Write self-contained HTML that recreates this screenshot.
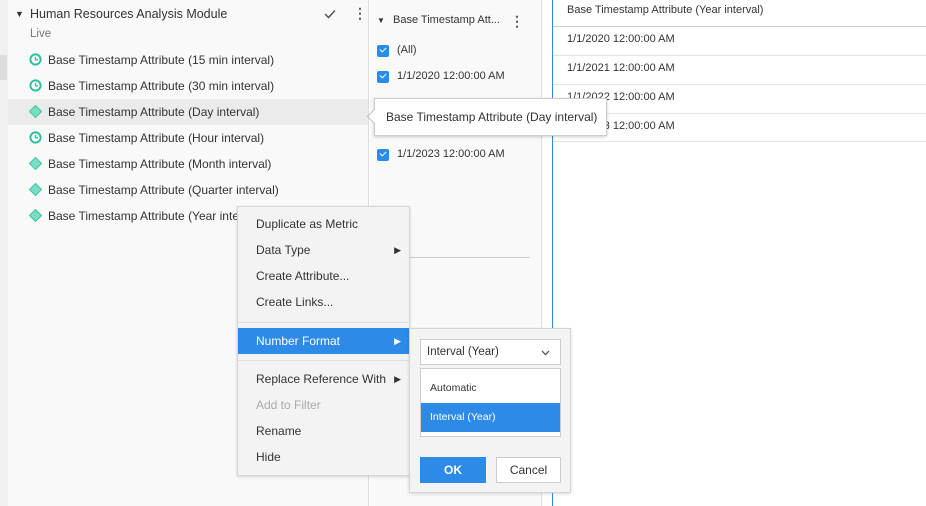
<!DOCTYPE html>
<html><head><style>
*{box-sizing:border-box;margin:0;padding:0}
body{width:926px;height:506px;overflow:hidden;font-family:"Liberation Sans",sans-serif;font-size:12px;color:#333;background:#fff;position:relative}
.abs{position:absolute;white-space:nowrap}
.row{position:absolute;left:8px;width:360px;height:26px;line-height:26px;padding-left:40px;white-space:nowrap}
.ic{position:absolute;left:21px;top:6px;width:13px;height:13px}
.cb{position:absolute;width:12px;height:12px;background:#2d8ae6;border-radius:2px}
.cb:after{content:"";position:absolute;left:3px;top:2px;width:5px;height:3px;border-left:1.5px solid #fff;border-bottom:1.5px solid #fff;transform:rotate(-45deg)}
.mi{position:absolute;left:0;width:172px;height:26px;line-height:26px;padding-left:18px;font-size:12px}
.arr{position:absolute;right:9px;font-size:9px}
</style></head><body>
<div class="abs" style="left:0;top:0;width:8px;height:506px;background:#f0f0f0"></div>
<div class="abs" style="left:0;top:55px;width:7px;height:25px;background:#ddd"></div>
<div class="abs" style="left:8px;top:0;width:361px;height:506px;background:#f9f9f9;border-right:1px solid #ddd"></div>
<div class="abs" style="left:370px;top:0;width:172px;height:506px;background:#f9f9f9;border-right:1px solid #ddd"></div>
<div class="abs" style="left:552px;top:0;width:374px;height:506px;background:#fff;border-left:1px solid #2d8ae6"></div>

<div class="abs" style="left:15px;top:9px;font-size:9px">▼</div>
<div class="abs" style="left:30px;top:7px;font-size:12.5px">Human Resources Analysis Module</div>
<svg class="abs" style="left:324px;top:9px" width="12" height="10" viewBox="0 0 12 10"><path d="M1 5L4.5 8.5L11 1.5" stroke="#555" stroke-width="1.5" fill="none"/></svg>
<div class="abs" style="left:353px;top:5px;font-size:14px;font-weight:bold;color:#555">⋮</div>
<div class="abs" style="left:30px;top:28px;color:#777;font-size:11.5px">Live</div>

<div class="row" style="top:47px"><svg class="ic" viewBox="0 0 12 12"><circle cx="6" cy="6" r="5.6" fill="#26c39a"/><circle cx="6" cy="6" r="3.8" fill="#fff"/><path d="M6 3.5V6.3H8.3" stroke="#26c39a" stroke-width="1.3" fill="none"/></svg>Base Timestamp Attribute (15 min interval)</div>
<div class="row" style="top:73px"><svg class="ic" viewBox="0 0 12 12"><circle cx="6" cy="6" r="5.6" fill="#26c39a"/><circle cx="6" cy="6" r="3.8" fill="#fff"/><path d="M6 3.5V6.3H8.3" stroke="#26c39a" stroke-width="1.3" fill="none"/></svg>Base Timestamp Attribute (30 min interval)</div>
<div class="row" style="top:99px;background:#ebebeb"><svg class="ic" viewBox="0 0 12 12"><path d="M6 0.5L11.5 6L6 11.5L0.5 6Z" fill="#7fdcc4" stroke="#3cc8a2"/></svg>Base Timestamp Attribute (Day interval)</div>
<div class="row" style="top:125px"><svg class="ic" viewBox="0 0 12 12"><circle cx="6" cy="6" r="5.6" fill="#26c39a"/><circle cx="6" cy="6" r="3.8" fill="#fff"/><path d="M6 3.5V6.3H8.3" stroke="#26c39a" stroke-width="1.3" fill="none"/></svg>Base Timestamp Attribute (Hour interval)</div>
<div class="row" style="top:151px"><svg class="ic" viewBox="0 0 12 12"><path d="M6 0.5L11.5 6L6 11.5L0.5 6Z" fill="#7fdcc4" stroke="#3cc8a2"/></svg>Base Timestamp Attribute (Month interval)</div>
<div class="row" style="top:177px"><svg class="ic" viewBox="0 0 12 12"><path d="M6 0.5L11.5 6L6 11.5L0.5 6Z" fill="#7fdcc4" stroke="#3cc8a2"/></svg>Base Timestamp Attribute (Quarter interval)</div>
<div class="row" style="top:203px"><svg class="ic" viewBox="0 0 12 12"><path d="M6 0.5L11.5 6L6 11.5L0.5 6Z" fill="#7fdcc4" stroke="#3cc8a2"/></svg>Base Timestamp Attribute (Year interval)</div>

<div class="abs" style="left:377px;top:16px;font-size:8px">▼</div>
<div class="abs" style="left:393px;top:14px;font-size:11px">Base Timestamp Att...</div>
<div class="abs" style="left:510px;top:13px;font-size:14px;font-weight:bold;color:#555">⋮</div>
<div class="cb" style="left:377px;top:45px"></div><div class="abs" style="left:397px;top:44px;font-size:11px">(All)</div>
<div class="cb" style="left:377px;top:71px"></div><div class="abs" style="left:397px;top:70px;font-size:11px">1/1/2020 12:00:00 AM</div>
<div class="cb" style="left:377px;top:149px"></div><div class="abs" style="left:397px;top:148px;font-size:11px">1/1/2023 12:00:00 AM</div>
<div class="abs" style="left:410px;top:257px;width:120px;border-top:1px solid #ccc"></div>

<div class="abs" style="left:553px;top:0;width:373px;height:27px;border-bottom:1px solid #ccc"></div>
<div class="abs" style="left:567px;top:4px;font-size:11px">Base Timestamp Attribute (Year interval)</div>
<div class="abs" style="left:553px;top:27px;width:373px;height:29px;border-bottom:1px solid #e3e3e3;padding:6px 14px;font-size:11px">1/1/2020 12:00:00 AM</div>
<div class="abs" style="left:553px;top:56px;width:373px;height:29px;border-bottom:1px solid #e3e3e3;padding:6px 14px;font-size:11px">1/1/2021 12:00:00 AM</div>
<div class="abs" style="left:553px;top:85px;width:373px;height:29px;border-bottom:1px solid #e3e3e3;padding:6px 14px;font-size:11px">1/1/2022 12:00:00 AM</div>
<div class="abs" style="left:553px;top:114px;width:373px;height:28px;border-bottom:1px solid #e3e3e3;padding:6px 14px;font-size:11px">1/1/2023 12:00:00 AM</div>

<div class="abs" style="left:374px;top:98px;width:233px;height:38px;background:#fff;border:1px solid #ccc;box-shadow:0 1px 3px rgba(0,0,0,.2);padding:11px 11px;font-size:12px;z-index:1">Base Timestamp Attribute (Day interval)</div>
<div class="abs" style="left:369px;top:111px;width:11px;height:11px;background:#fff;border-left:1px solid #bbb;border-bottom:1px solid #bbb;transform:rotate(45deg);z-index:2"></div>

<div class="abs" style="left:237px;top:206px;width:173px;height:270px;background:#f3f3f3;border:1px solid #d5d5d5;box-shadow:0 1px 3px rgba(0,0,0,.15);z-index:4">
<div class="mi" style="top:4px">Duplicate as Metric</div>
<div class="mi" style="top:30px">Data Type<span class="arr">▶</span></div>
<div class="mi" style="top:56px">Create Attribute...</div>
<div class="mi" style="top:82px">Create Links...</div>
<div class="abs" style="left:0;top:115px;width:171px;border-top:1px solid #ddd"></div>
<div class="mi" style="top:121px;background:#2d8ae6;color:#fff">Number Format<span class="arr">▶</span></div>
<div class="abs" style="left:0;top:153px;width:171px;border-top:1px solid #ddd"></div>
<div class="mi" style="top:159px">Replace Reference With<span class="arr">▶</span></div>
<div class="mi" style="top:185px;color:#aaa">Add to Filter</div>
<div class="mi" style="top:211px">Rename</div>
<div class="mi" style="top:237px">Hide</div>
</div>

<div class="abs" style="left:409px;top:328px;width:162px;height:165px;background:#f3f3f3;border:1px solid #d5d5d5;box-shadow:0 1px 3px rgba(0,0,0,.15);z-index:5">
<div class="abs" style="left:10px;top:10px;width:141px;height:26px;background:#fff;border:1px solid #ccc;padding:6px 6px;font-size:11.5px">Interval (Year)<svg style="position:absolute;right:10px;top:10px" width="9" height="6" viewBox="0 0 9 6"><path d="M1 1L4.5 4.5L8 1" stroke="#444" stroke-width="1.2" fill="none"/></svg></div>
<div class="abs" style="left:10px;top:39px;width:141px;height:69px;background:#fff;border:1px solid #ccc">
<div style="height:34px;line-height:38px;padding-left:9px;font-size:10.5px">Automatic</div>
<div style="height:29px;line-height:28px;padding-left:9px;font-size:10.5px;background:#2d8ae6;color:#fff">Interval (Year)</div>
</div>
<div class="abs" style="left:10px;top:128px;width:66px;height:26px;background:#2d8ae6;color:#fff;font-weight:bold;text-align:center;line-height:26px;font-size:12px">OK</div>
<div class="abs" style="left:86px;top:128px;width:65px;height:26px;background:#fff;border:1px solid #ccc;text-align:center;line-height:24px;font-size:12px">Cancel</div>
</div>
</body></html>
